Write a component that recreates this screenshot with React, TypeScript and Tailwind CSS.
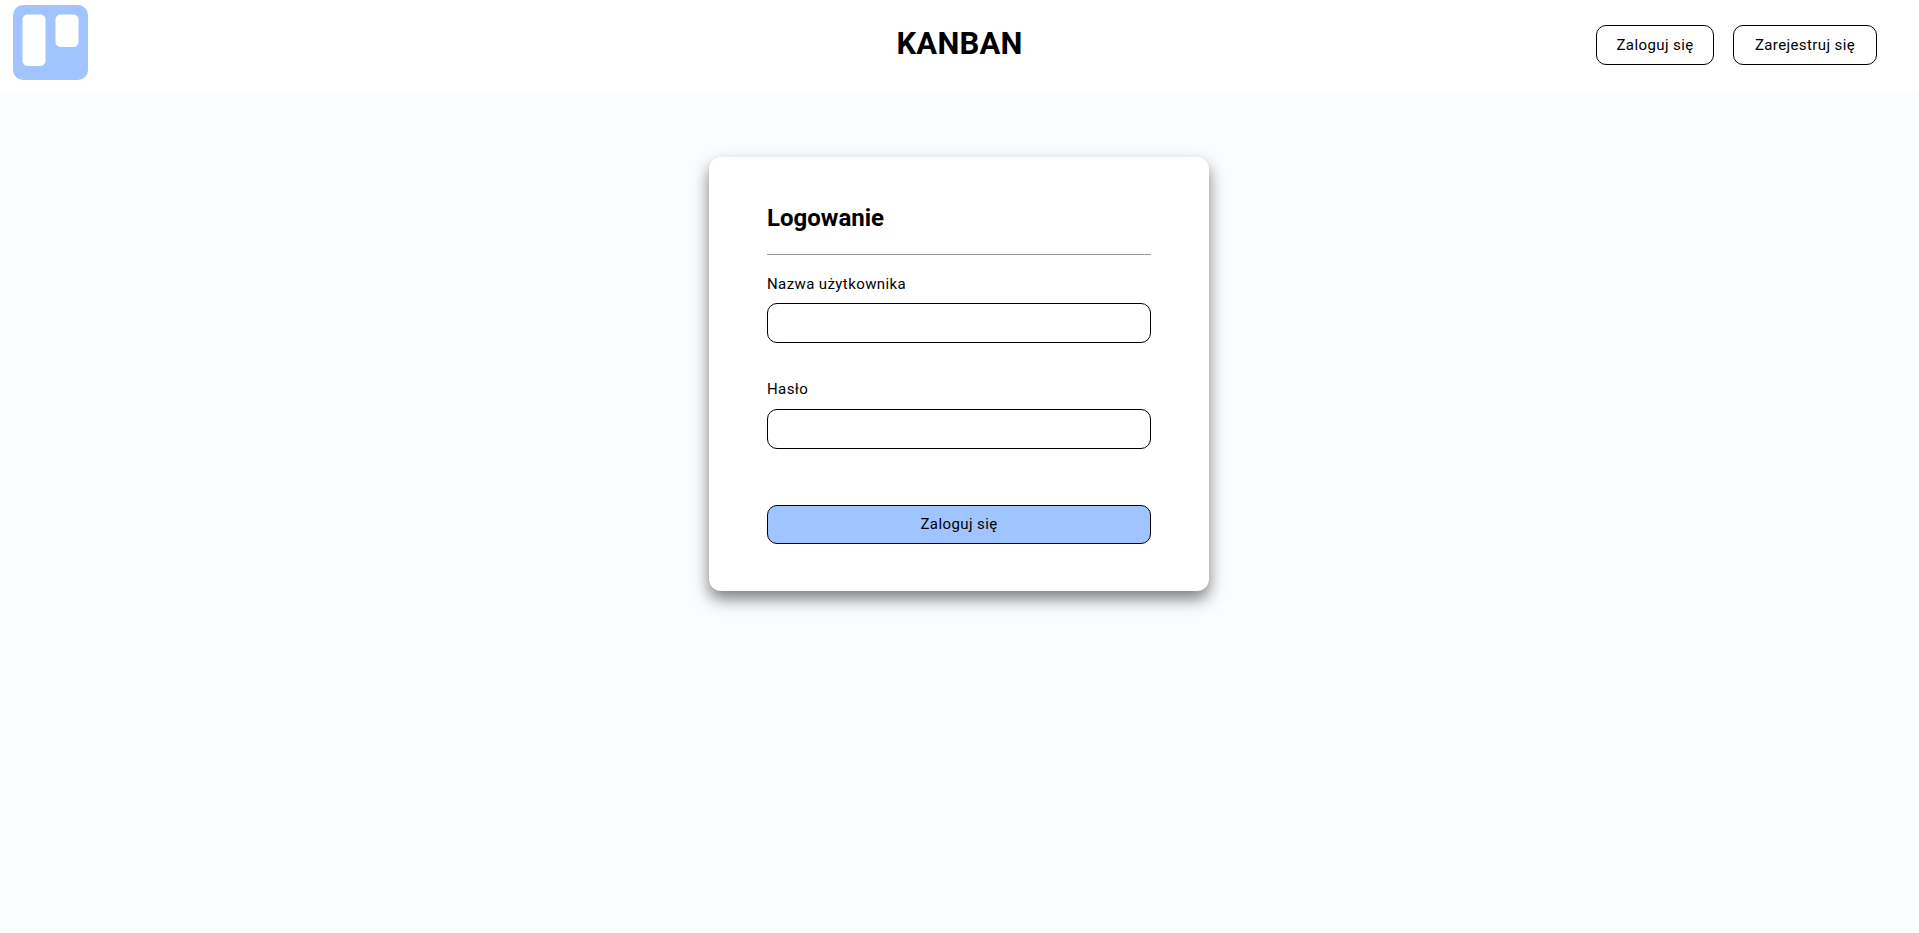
import React from "react";

function Logo() {
  return (
    <svg width="75" height="75" viewBox="0 0 75 75" className="block">
      <rect x="0" y="0" width="75" height="75" rx="10" fill="#a0c4ff" />
      <rect x="9.5" y="9.5" width="23" height="51.5" rx="5" fill="#ffffff" />
      <rect x="42.5" y="9.5" width="23" height="32.5" rx="5" fill="#ffffff" />
    </svg>
  );
}

export default function App() {
  return (
    <div className="min-h-[933px] bg-[#fbfcfe] font-['Roboto',sans-serif] text-black">
      <header className="grid h-[92px] grid-cols-3 items-center bg-white px-[13px]">
        <div className="-mt-[7px]">
          <Logo />
        </div>
        <h1 className="-mt-[6px] text-center text-[31px] font-bold leading-none tracking-[0.2px]">KANBAN</h1>
        <div className="-mt-[2px] flex justify-end gap-[19px] pr-[29px]">
          <button type="button" className="h-10 w-[118px] rounded-[10px] border border-black bg-white text-[15px] font-[450] tracking-[0.4px]">
            Zaloguj się
          </button>
          <button type="button" className="h-10 w-[144px] rounded-[10px] border border-black bg-white text-[15px] font-[450] tracking-[0.4px]">
            Zarejestruj się
          </button>
        </div>
      </header>

      <main className="flex justify-center pr-px pt-[65px]">
        <form className="h-[434px] w-[500px] rounded-[12px] bg-white px-[58px] pt-[44px] shadow-[0_8px_16px_rgba(0,0,0,0.5)]">
          <h2 className="text-[24px] font-bold leading-[34px]">Logowanie</h2>
          <div className="mt-[19px] h-px bg-[#999999]" />
          <label className="mt-[19px] block text-[15px] font-[450] leading-[20px] tracking-[0.4px]">Nazwa użytkownika</label>
          <input className="mt-[9px] block h-10 w-full rounded-[10px] border border-black bg-white" />
          <label className="mt-[36px] block text-[15px] font-[450] leading-[20px] tracking-[0.4px]">Hasło</label>
          <input className="mt-[10px] block h-10 w-full rounded-[10px] border border-black bg-white" />
          <button type="button" className="mt-[56px] block h-[39px] w-full rounded-[10px] border border-black bg-[#a0c4ff] text-[15px] font-[450] tracking-[0.4px]">
            Zaloguj się
          </button>
        </form>
      </main>
    </div>
  );
}
